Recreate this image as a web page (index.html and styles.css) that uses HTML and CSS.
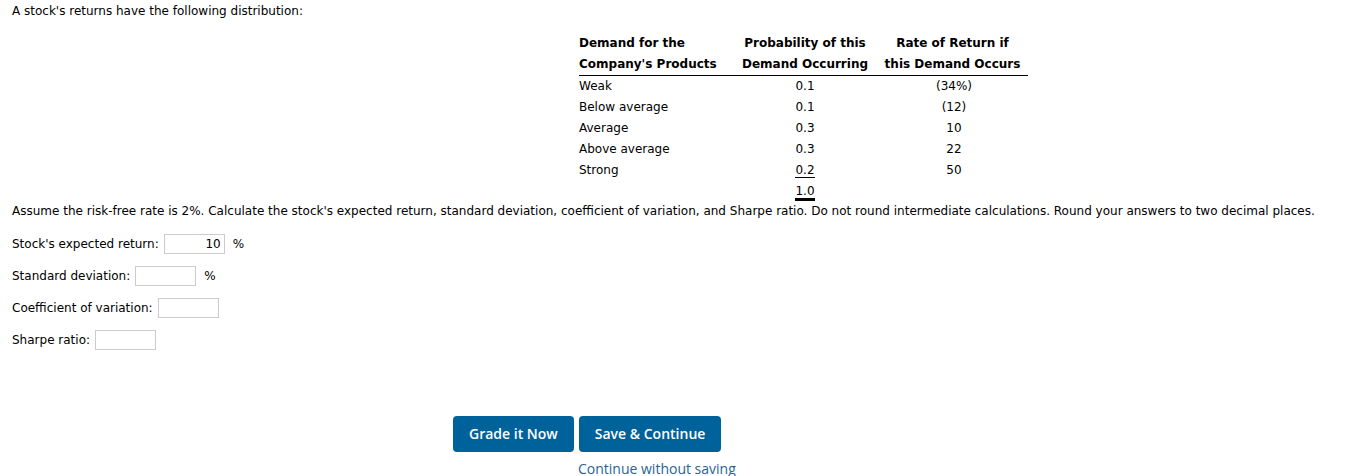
FILE: index.html
```html
<!DOCTYPE html>
<html lang="en">
  <head>
    <meta charset="UTF-8" />
    <title>Problem</title>
    <link rel="stylesheet" href="styles.css">
  </head>
  <body>
    <div class="question">
      <p class="intro">A stock's returns have the following distribution:</p>
      <table class="dist">
        <colgroup>
          <col class="c1"><col class="c2"><col class="c3">
        </colgroup>
        <thead>
          <tr>
            <th class="left">Demand for the<br>Company's Products</th>
            <th>Probability of this<br>Demand Occurring</th>
            <th class="rate">Rate of Return if<br>this Demand Occurs</th>
          </tr>
        </thead>
        <tbody>
          <tr><td class="left">Weak</td><td>0.1</td><td class="rate">(34%)</td></tr>
          <tr><td class="left">Below average</td><td>0.1</td><td class="rate">(12)</td></tr>
          <tr><td class="left">Average</td><td>0.3</td><td class="rate">10</td></tr>
          <tr><td class="left">Above average</td><td>0.3</td><td class="rate">22</td></tr>
          <tr><td class="left">Strong</td><td><span class="under">0.2</span></td><td class="rate">50</td></tr>
          <tr><td class="left"></td><td><span class="total">1.0</span></td><td></td></tr>
        </tbody>
      </table>
      <p class="task">Assume the risk-free rate is 2%. Calculate the stock's expected return, standard deviation, coefficient of variation, and Sharpe ratio. Do not round intermediate calculations. Round your answers to two decimal places.</p>
      <div class="answer-row">
        <label>Stock's expected return:</label>
        <input class="ans" type="text" value="10" />
        <span class="unit">%</span>
      </div>
      <div class="answer-row">
        <label>Standard deviation:</label>
        <input class="ans" type="text" />
        <span class="unit">%</span>
      </div>
      <div class="answer-row">
        <label>Coefficient of variation:</label>
        <input class="ans" type="text" />
      </div>
      <div class="answer-row">
        <label>Sharpe ratio:</label>
        <input class="ans" type="text" />
      </div>
    </div>
    <div class="actions">
      <div class="buttons">
        <button class="btn">Grade it Now</button>
        <button class="btn">Save &amp; Continue</button>
      </div>
      <a href="#" class="skip">Continue without saving</a>
    </div>
  </body>
</html>
```

FILE: styles.css
```css
body {
  margin: 0;
  padding: 0 12px;
  font-family: "DejaVu Sans", Verdana, sans-serif;
  font-size: 12px;
  color: #000;
  background: #fff;
}
.intro {
  margin: 4px 0 0;
  line-height: 14px;
}
.dist {
  border-collapse: collapse;
  table-layout: fixed;
  width: 449px;
  margin: 15px 0 0 567px;
}
.c1 {
  width: 159px;
}
.c2 {
  width: 134px;
}
.c3 {
  width: 156px;
}
.dist th {
  font-weight: bold;
  text-align: center;
  line-height: 21px;
  padding: 0;
  white-space: nowrap;
  border-bottom: 1px solid #000;
}
.dist td {
  text-align: center;
  line-height: 21px;
  padding: 0;
}
.dist .left {
  text-align: left;
}
.dist th.rate {
  padding-left: 5px;
}
.dist td.rate {
  padding-left: 8px;
}
.under {
  border-bottom: 1px solid #000;
}
.total {
  border-bottom: 3px solid #000;
}
.task {
  margin: 2px 0 0;
  line-height: 14px;
}
.answer-row {
  display: flex;
  align-items: center;
  height: 20px;
  margin-top: 16px;
}
.answer-row + .answer-row {
  margin-top: 12px;
}
.answer-row label {
  margin-right: 5px;
}
.ans {
  width: 61px;
  height: 20px;
  box-sizing: border-box;
  border: 1px solid #ccc;
  padding: 0 3px;
  font-family: inherit;
  font-size: 12px;
  text-align: right;
}
.unit {
  margin-left: 8px;
}
.actions {
  display: flex;
  flex-direction: column;
  align-items: flex-start;
  margin: 66px 0 0 441px;
}
.buttons {
  display: flex;
  gap: 5px;
}
.btn {
  background: #00629b;
  color: #fff;
  border: none;
  border-radius: 4px;
  height: 36px;
  padding: 0 16px 2px;
  font-family: "Open Sans", sans-serif;
  font-weight: 600;
  font-size: 14px;
}
.skip {
  margin: 7px 0 0 125px;
  font-family: "Open Sans", sans-serif;
  font-size: 14px;
  color: #2a6496;
  text-decoration: none;
}
```
